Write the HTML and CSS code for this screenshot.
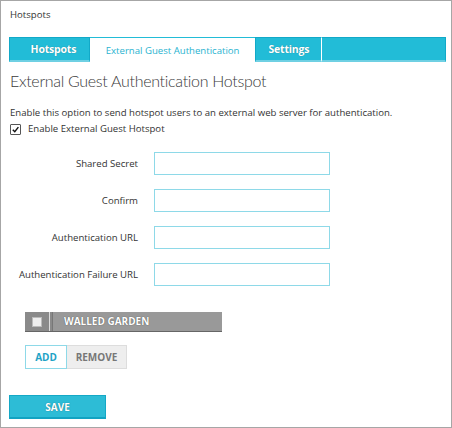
FILE: index.html
```html
<!DOCTYPE html>
<html>
<head>
<meta charset="utf-8">
<link rel="stylesheet" href="styles.css">
</head>
<body>
<div class="page">
  <div class="crumb">Hotspots</div>
  <div class="tabs">
    <div class="tab tab-hotspots">Hotspots</div>
    <div class="tab tab-active">External Guest Authentication</div>
    <div class="tab tab-settings">Settings</div>
    <div class="tab tab-fill"></div>
  </div>
  <h1 class="heading">External Guest Authentication Hotspot</h1>
  <p class="desc">Enable this option to send hotspot users to an external web server for authentication.</p>
  <label class="check-row"><span class="checkbox checked"><svg viewBox="0 0 10 10" width="10" height="10"><path d="M2 5.2 L4.2 7.4 L8.2 2.4" fill="none" stroke="#111" stroke-width="1.6"/></svg></span>Enable External Guest Hotspot</label>
  <div class="form">
    <div class="field"><span class="label">Shared Secret</span><span class="input"></span></div>
    <div class="field"><span class="label">Confirm</span><span class="input"></span></div>
    <div class="field"><span class="label">Authentication URL</span><span class="input"></span></div>
    <div class="field"><span class="label">Authentication Failure URL</span><span class="input"></span></div>
  </div>
  <div class="table-head">
    <div class="th-check"><span class="mini-box"></span></div>
    <div class="th-title">WALLED GARDEN</div>
  </div>
  <div class="btn-group">
    <div class="btn btn-add">ADD</div>
    <div class="btn btn-remove">REMOVE</div>
  </div>
  <div class="save">SAVE</div>
</div>
</body>
</html>
```
FILE: styles.css
```css
html, body {
  margin: 0;
  padding: 0;
  background: #fff;
}
.page {
  width: 452px;
  height: 428px;
  box-sizing: border-box;
  border: 1px solid #a6a6a6;
  padding: 0 5px 0 8px;
  font-family: "Open Sans", "Liberation Sans", sans-serif;
  color: #333;
  font-size: 9.6px;
}
.crumb {
  font-size: 9.6px;
  margin-top: 7px;
  line-height: 14px;
  padding-left: 1px;
}
.tabs {
  display: flex;
  margin-top: 15px;
  height: 25px;
}
.tab {
  box-sizing: border-box;
  height: 25px;
  background: #22bcd7;
  border: 1px solid #12a9c8;
  border-bottom: 2px solid #6fd0e3;
  color: #fff;
  font-weight: bold;
  font-size: 10.5px;
  display: flex;
  align-items: center;
  justify-content: center;
  text-shadow: 0 0 1px rgba(0,0,0,0.35);
  letter-spacing: -0.2px;
}
.tab-hotspots { width: 81px; padding-left: 8px; }
.tab-active {
  width: 166px;
  background: #fff;
  border: none;
  border-top: 1px solid #22bcd7;
  color: #2ab3d0;
  font-weight: normal;
  font-size: 9.6px;
  text-shadow: none;
  letter-spacing: 0;
}
.tab-settings { width: 67px; border-right: 1px solid #fff; }
.tab-fill { width: 124px; border-left: none; }
.heading {
  margin: 6px 0 0 1px;
  font-family: "Lato", "Open Sans", sans-serif;
  font-size: 16px;
  letter-spacing: -0.3px;
  font-weight: 300;
  color: #3a3a3a;
  line-height: 26px;
}
.desc {
  margin: 12px 0 0 1px;
  line-height: 14px;
}
.check-row {
  display: flex;
  align-items: center;
  margin: 2px 0 0 1px;
  line-height: 14px;
}
.checkbox {
  width: 9px;
  height: 9px;
  border: 1px solid #555;
  border-radius: 1px;
  margin-right: 7px;
  display: flex;
  align-items: center;
  justify-content: center;
  background: #fff;
}
.checkbox svg { width: 9px; height: 9px; }
.form {
  display: flex;
  flex-direction: column;
  gap: 14px;
  margin-top: 16px;
}
.field {
  display: flex;
  align-items: center;
}
.label {
  width: 129px;
  text-align: right;
  padding-right: 16px;
}
.input {
  box-sizing: border-box;
  width: 176px;
  height: 23px;
  border: 1px solid #8ed9e8;
}
.table-head {
  display: flex;
  margin: 26px 0 0 16px;
  width: 197px;
  height: 19px;
  background: #8a8a8a;
  border-bottom: 1px solid #666;
}
.th-check {
  width: 24px;
  display: flex;
  align-items: center;
  justify-content: center;
  border-right: 1px solid #ddd;
}
.mini-box {
  width: 8px;
  height: 8px;
  background: #eee;
  border: 1px solid #bbb;
}
.th-title {
  flex: 1;
  background: #999;
  margin-left: 2px;
  color: #fff;
  font-weight: bold;
  font-size: 10px;
  line-height: 19px;
  padding-left: 11px;
  text-shadow: 0 0 1px rgba(0,0,0,0.6);
  border-left: 1px solid #777;
}
.btn-group {
  display: flex;
  margin: 13px 0 0 16px;
}
.btn {
  box-sizing: border-box;
  height: 24px;
  display: flex;
  align-items: center;
  justify-content: center;
  font-size: 10px;
  font-weight: bold;
}
.btn-add {
  width: 42px;
  border: 1px solid #8ed9e8;
  color: #1fa3c6;
}
.btn-remove {
  width: 60px;
  background: #eee;
  border: 1px solid #ddd;
  border-left: none;
  color: #777;
}
.save {
  box-sizing: border-box;
  margin-top: 26px;
  width: 97px;
  height: 24px;
  background: #2dbcd6;
  border: 1px solid #15a8c6;
  border-bottom: 2px solid #12a3c2;
  color: #fff;
  font-weight: bold;
  font-size: 10px;
  display: flex;
  align-items: center;
  justify-content: center;
  text-shadow: 0 0 1px rgba(0,0,0,0.5);
}
```
